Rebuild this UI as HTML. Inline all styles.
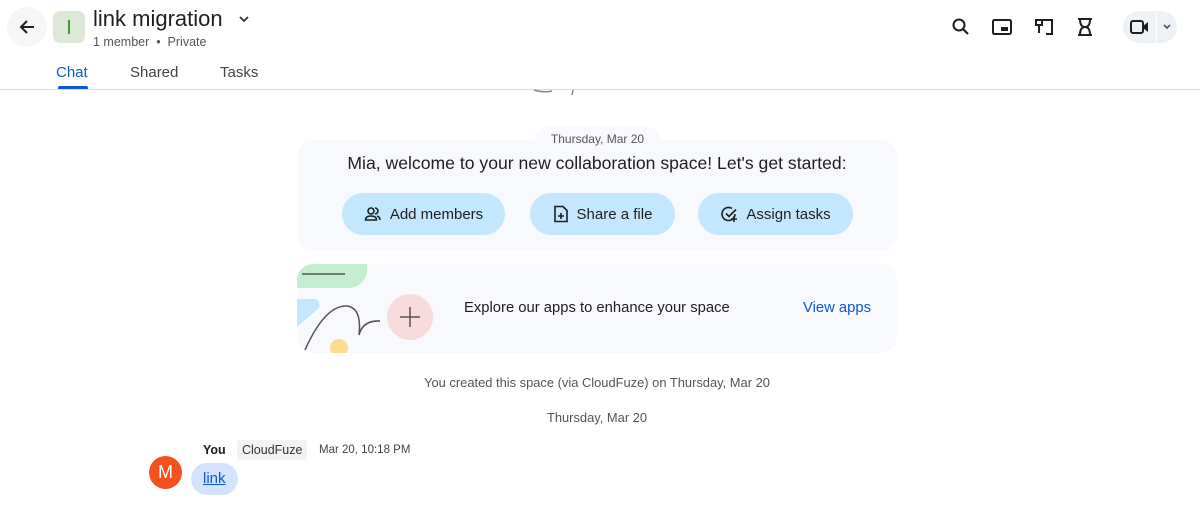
<!DOCTYPE html>
<html><head><style>
*{box-sizing:border-box;margin:0;padding:0}
body{width:1200px;height:505px;background:#fff;font-family:"Liberation Sans",sans-serif;color:#1f1f1f;position:relative;overflow:hidden}
.a{position:absolute}
.btn{position:absolute;top:193px;height:42px;border-radius:21px;background:#c2e7ff;display:flex;align-items:center;justify-content:center;font-size:15px;color:#1f1f1f;gap:8px}
svg{display:block}
</style></head><body>
<div class="a" style="left:7px;top:7px;width:40px;height:40px;border-radius:50%;background:#f5f6f8"></div>
<svg class="a" style="left:17px;top:17px" width="20" height="20" viewBox="0 0 20 20"><path d="M17 10H4M10 4L4 10l6 6" stroke="#1f1f1f" stroke-width="2" fill="none"/></svg>
<div class="a" style="left:53px;top:11px;width:32px;height:32px;border-radius:7px;background:#dde8d6"></div>
<div class="a" style="left:68px;top:20px;width:2px;height:14px;background:#3d9b35"></div>
<div class="a" style="left:93px;top:6px;font-size:22px">link migration</div>
<svg class="a" style="left:238px;top:14px" width="12" height="10" viewBox="0 0 12 10"><path d="M2 3l4 4 4-4" stroke="#333" stroke-width="1.8" fill="none"/></svg>
<div class="a" style="left:93px;top:35px;font-size:12.5px;color:#555">1 member &nbsp;•&nbsp; Private</div>
<div class="a" style="left:56px;top:64px;font-size:15px;color:#0b57d0">Chat</div>
<div class="a" style="left:58px;top:86px;width:30px;height:3px;border-radius:2px 2px 0 0;background:#0b57d0"></div>
<div class="a" style="left:130px;top:64px;font-size:15px;color:#444">Shared</div>
<div class="a" style="left:220px;top:64px;font-size:15px;color:#444">Tasks</div>
<div class="a" style="left:0;top:89px;width:1200px;height:1px;background:#dcdcdc"></div>
<svg class="a" style="left:950px;top:16px" width="22" height="22" viewBox="0 0 22 22"><circle cx="9" cy="9" r="5.5" stroke="#1f1f1f" stroke-width="2" fill="none"/><path d="M13 13l5 5" stroke="#1f1f1f" stroke-width="2.2"/></svg>
<svg class="a" style="left:991px;top:16px" width="22" height="22" viewBox="0 0 22 22"><rect x="2" y="4" width="18" height="14" rx="1.5" stroke="#1f1f1f" stroke-width="2" fill="none"/><rect x="10" y="11" width="7" height="4" fill="#1f1f1f"/></svg>
<svg class="a" style="left:1032px;top:16px" width="24" height="22" viewBox="0 0 24 22"><path d="M6 4h14v14h-6M4 4h6v5H4zM7 9v8" stroke="#1f1f1f" stroke-width="2" fill="none"/></svg>
<svg class="a" style="left:1075px;top:16px" width="20" height="22" viewBox="0 0 20 22"><path d="M3 3h14M3 19h14M5 3q0 8 5 8t5-8M5 19q0-8 5-8t5 8" stroke="#1f1f1f" stroke-width="2" fill="none"/></svg>
<div class="a" style="left:1123px;top:11px;width:54px;height:32px;border-radius:16px;background:#eef1f6"></div>
<div class="a" style="left:1156px;top:11px;width:1px;height:32px;background:#fff"></div>
<svg class="a" style="left:1129px;top:18px" width="22" height="18" viewBox="0 0 22 18"><rect x="2" y="3" width="12" height="12" rx="2" stroke="#1f1f1f" stroke-width="2" fill="none"/><path d="M14 8l5-4v10l-5-4z" fill="#1f1f1f"/></svg>
<svg class="a" style="left:1161px;top:22px" width="12" height="10" viewBox="0 0 12 10"><path d="M3 3l3 3 3-3" stroke="#444" stroke-width="1.5" fill="none"/></svg>
<svg class="a" style="left:530px;top:88px" width="50" height="10"><path d="M4 2q10 3 18 1M43 2l-1 5" stroke="#888" stroke-width="1.5" fill="none"/></svg>
<div class="a" style="left:297px;top:140px;width:600px;height:110px;border-radius:16px;background:#f8f9fd"></div>
<div class="a" style="left:535px;top:126px;width:125px;height:30px;border-radius:15px;background:#f8f9fd"></div>
<div class="a" style="left:535px;top:132px;width:125px;text-align:center;font-size:12px;color:#555">Thursday, Mar 20</div>
<div class="a" style="left:297px;top:153px;width:600px;text-align:center;font-size:17.6px">Mia, welcome to your new collaboration space! Let's get started:</div>
<div class="btn" style="left:342px;width:163px"><svg width="18" height="18" viewBox="0 0 18 18"><circle cx="7" cy="6" r="3" stroke="#1f1f1f" stroke-width="1.6" fill="none"/><path d="M1.5 15q0-4 5.5-4t5.5 4zM11 3a3 3 0 010 6M13 11q3 1 3 4" stroke="#1f1f1f" stroke-width="1.6" fill="none"/></svg>Add members</div>
<div class="btn" style="left:530px;width:145px"><svg width="16" height="18" viewBox="0 0 16 18"><path d="M2 1.5h8l4 4v11H2z" stroke="#1f1f1f" stroke-width="1.6" fill="none"/><path d="M8 8v6M5 11h6" stroke="#1f1f1f" stroke-width="1.6"/></svg>Share a file</div>
<div class="btn" style="left:698px;width:155px"><svg width="18" height="18" viewBox="0 0 18 18"><path d="M15 9a6.5 6.5 0 11-3-5.5M6 8.5l3 3 7-7M14 11v6M11 14h6" stroke="#1f1f1f" stroke-width="1.6" fill="none"/></svg>Assign tasks</div>
<div class="a" style="left:297px;top:264px;width:600px;height:89px;border-radius:16px;background:#f8f9fd;overflow:hidden">
<svg width="150" height="89" viewBox="0 0 150 89"><path d="M0 0h70v6a18 18 0 01-18 18H0z" fill="#c4eed0"/><path d="M5 10h43" stroke="#555" stroke-width="1.5"/><path d="M0 35h17a6 6 0 014 10l-21 18z" fill="#c2e7ff"/><circle cx="42" cy="84" r="9" fill="#fddc92"/><circle cx="113" cy="53" r="23" fill="#f8dbda"/><path d="M113 43v20M103 53h20" stroke="#555" stroke-width="1.5"/><path d="M8 86q20-45 42-44q15 2 12 29q4-15 21-14" stroke="#555" stroke-width="1.5" fill="none"/></svg>
</div>
<div class="a" style="left:464px;top:300px;font-size:14.8px">Explore our apps to enhance your space</div>
<div class="a" style="left:803px;top:300px;font-size:14.8px;color:#0b57d0">View apps</div>
<div class="a" style="left:0;top:375px;width:1194px;text-align:center;font-size:12.9px;color:#555">You created this space (via CloudFuze) on Thursday, Mar 20</div>
<div class="a" style="left:0;top:410px;width:1194px;text-align:center;font-size:12.9px;color:#555">Thursday, Mar 20</div>
<div class="a" style="left:149px;top:456px;width:33px;height:33px;border-radius:50%;background:#f4511e;color:#fff;font-size:18px;text-align:center;line-height:33px">M</div>
<div class="a" style="left:203px;top:443px;font-size:12.5px;font-weight:bold">You</div>
<div class="a" style="left:237px;top:440px;height:20px;padding:0 5px;border-radius:3px;background:#f1f3f4;font-size:12.5px;line-height:20px;color:#333">CloudFuze</div>
<div class="a" style="left:319px;top:444px;font-size:11.5px;color:#444">Mar 20, 10:18 PM</div>
<div class="a" style="left:191px;top:463px;width:47px;height:32px;border-radius:16px;background:#d3e3fd"></div>
<div class="a" style="left:203px;top:470px;font-size:15px;color:#0b57d0;text-decoration:underline">link</div>
</body></html>
